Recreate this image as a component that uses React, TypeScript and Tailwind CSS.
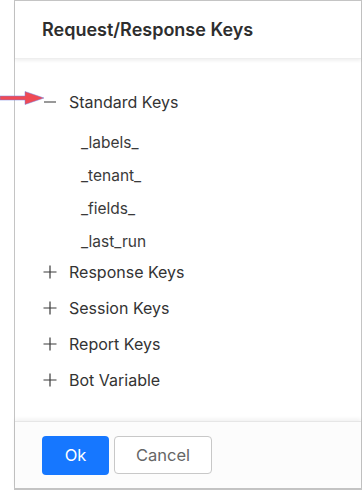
const children = ["_labels_", "_tenant_", "_fields_", "_last_run"];
const closed = ["Response Keys", "Session Keys", "Report Keys", "Bot Variable"];

function PlusIcon() {
  return (
    <svg width="14" height="14" viewBox="0 0 14 14" className="shrink-0">
      <path d="M7 0.5 V13.5 M0.5 7 H13.5" stroke="#3a3a3a" strokeWidth="1.2" fill="none" />
    </svg>
  );
}

function MinusIcon() {
  return (
    <svg width="14" height="14" viewBox="0 0 14 14" className="shrink-0">
      <path d="M1 7 H13" stroke="#555" strokeWidth="1.2" fill="none" />
    </svg>
  );
}

export default function App() {
  return (
    <div className="relative w-[362px] h-[490px] bg-white text-[#333] font-['Inter',sans-serif] pl-[14px]">
      <div className="flex flex-col h-[490px] border-l-[1.5px] border-r-[1.5px] border-t border-b-2 border-[#c4c4c4] bg-white">
        {/* Header */}
        <div className="h-[58px] flex items-center pl-[27px] shrink-0 shadow-[0_2px_3px_rgba(0,0,0,0.06)] border-b border-[#eeeeee] z-10">
          <h2 className="text-[18px] font-semibold text-[#2e2e2e]">Request/Response Keys</h2>
        </div>

        {/* Body */}
        <div className="flex-1 pl-[28px] pt-[29px]">
          <div className="flex items-center h-[28px] gap-[12px]">
            <MinusIcon />
            <span className="text-[16px]">Standard Keys</span>
          </div>
          <div className="pl-[38px] pt-[10px] flex flex-col">
            {children.map((c) => (
              <div key={c} className="h-[33px] flex items-center text-[15.5px] text-[#3a3a3a]">
                {c}
              </div>
            ))}
          </div>
          <div className="flex flex-col -mt-[4px]">
            {closed.map((c) => (
              <div key={c} className="flex items-center h-[36px] gap-[12px]">
                <PlusIcon />
                <span className="text-[16px]">{c}</span>
              </div>
            ))}
          </div>
        </div>

        {/* Footer */}
        <div className="h-[67px] shrink-0 bg-[#fcfcfc] border-t border-[#e6e6e6] shadow-[0_-2px_4px_rgba(0,0,0,0.06)] flex items-center pl-[27px] gap-[5px]">
          <button className="w-[67px] h-[39px] rounded-[4px] bg-[#1677ff] text-white text-[16.5px]">Ok</button>
          <button className="w-[98px] h-[38px] rounded-[4px] border border-[#c8c8c8] bg-white text-[#666] text-[16.5px]">Cancel</button>
        </div>
      </div>

      {/* Red arrow annotation */}
      <svg className="absolute left-0 top-[90px]" width="46" height="16" viewBox="0 0 46 16">
        <path d="M0 6 H25 V1.5 L44 8 L25 14.5 V10 H0 Z" fill="#ef4a55" stroke="#7080e0" strokeWidth="0.5" />
      </svg>
    </div>
  );
}
